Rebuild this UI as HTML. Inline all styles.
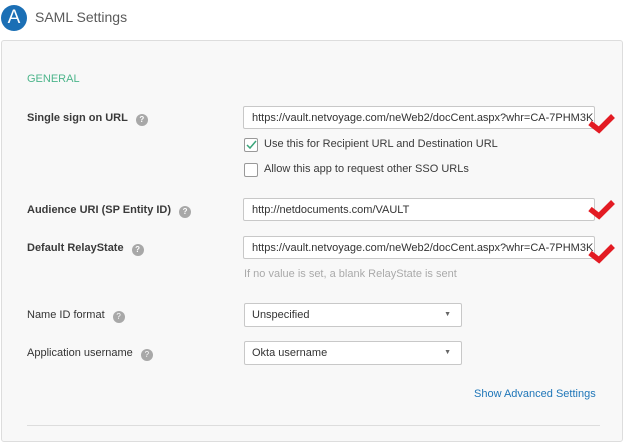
<!DOCTYPE html><html><head><style>
body{margin:0;width:624px;height:435px;background:#fff;font-family:"Liberation Sans",sans-serif;position:relative;overflow:hidden}
.a{position:absolute}
.lbl{position:absolute;left:27px;font-size:11px;font-weight:bold;color:#3a3a3a}
.q{display:inline-block;width:12px;height:12px;border-radius:50%;background:#a8a8a8;color:#fff;font-size:8px;text-align:center;line-height:12px;margin-left:8px;vertical-align:-1px}
.in{position:absolute;left:243px;width:352px;height:23px;border:1px solid #c8c8c8;background:#fff;border-radius:2px;font-size:11px;color:#333;line-height:23px;padding-left:8px;box-sizing:border-box;white-space:nowrap;overflow:hidden}
.cb{position:absolute;left:244px;width:12px;height:12px;border:1px solid #999;background:#fff;border-radius:2px}
.t{position:absolute;font-size:11px;color:#3a3a3a}
.sel{position:absolute;left:244px;width:218px;height:24px;border:1px solid #c8c8c8;background:#fff;border-radius:2px;box-sizing:border-box;font-size:11px;line-height:22px;padding-left:7px;color:#333}
.sel:after{content:"▼";position:absolute;right:10px;top:0;font-size:7px;color:#666}
</style></head><body>
<div class="a" style="left:1px;top:5px;width:26px;height:26px;border-radius:50%;background:#1b6fb5;color:#fff;font-size:19px;text-align:center;line-height:26px">A</div>
<div class="a" style="left:35px;top:9px;font-size:14px;color:#5a5a5a">SAML Settings</div>
<div class="a" style="left:1px;top:40px;width:620px;height:400px;border:1px solid #ddd;background:#f8f8f8;border-radius:3px"></div>
<div class="a" style="left:27px;top:73px;font-size:11px;color:#4db58b">GENERAL</div>
<div class="lbl" style="top:112px">Single sign on URL<span class="q">?</span></div>
<div class="in" style="top:106px">https://vault.netvoyage.com/neWeb2/docCent.aspx?whr=CA-7PHM3K</div>
<div class="cb" style="top:138px"><svg width="12" height="12" style="position:absolute;left:0;top:0"><path d="M2 6l3 3 6-7" stroke="#3aa57a" stroke-width="1.5" fill="none"/></svg></div>
<div class="t" style="left:264px;top:138px">Use this for Recipient URL and Destination URL</div>
<div class="cb" style="top:163px"></div>
<div class="t" style="left:264px;top:163px">Allow this app to request other SSO URLs</div>
<div class="lbl" style="top:204px">Audience URI (SP Entity ID)<span class="q">?</span></div>
<div class="in" style="top:198px">http://netdocuments.com/VAULT</div>
<div class="lbl" style="top:242px">Default RelayState<span class="q">?</span></div>
<div class="in" style="top:236px">https://vault.netvoyage.com/neWeb2/docCent.aspx?whr=CA-7PHM3K</div>
<div class="t" style="left:244px;top:268px;color:#aaa">If no value is set, a blank RelayState is sent</div>
<div class="lbl" style="top:309px;font-weight:normal;color:#333">Name ID format<span class="q">?</span></div>
<div class="sel" style="top:303px">Unspecified</div>
<div class="lbl" style="top:347px;font-weight:normal;color:#333">Application username<span class="q">?</span></div>
<div class="sel" style="top:341px">Okta username</div>
<div class="t" style="left:474px;top:388px;color:#1f76b8">Show Advanced Settings</div>
<div class="a" style="left:27px;top:425px;width:573px;height:1px;background:#ddd"></div>
<svg class="a" style="left:585px;top:105px" width="39" height="165">
<path d="M5 18l9 7 14-14" stroke="#e31b23" stroke-width="5.5" fill="none"/>
<path d="M5 104l9 7 14-14" stroke="#e31b23" stroke-width="5.5" fill="none"/>
<path d="M5 148l9 7 14-14" stroke="#e31b23" stroke-width="5.5" fill="none"/>
</svg>
</body></html>
